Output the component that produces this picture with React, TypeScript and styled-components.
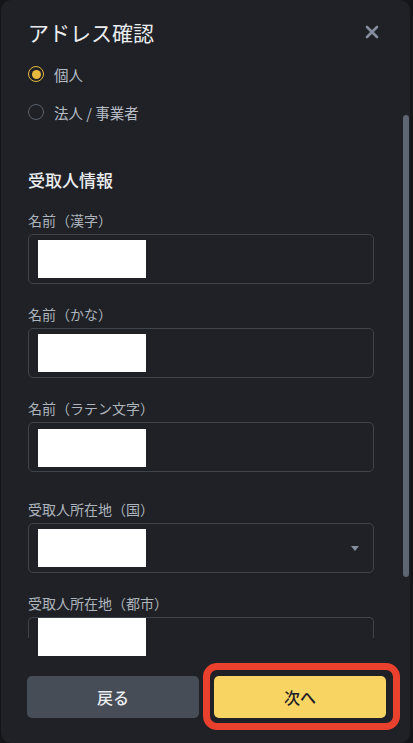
import React, { useState } from 'react';
import styled, { createGlobalStyle } from 'styled-components';

const GlobalStyle = createGlobalStyle`
  html, body {
    margin: 0;
    padding: 0;
    background: #141518;
  }
  body {
    font-family: "Noto Sans CJK JP", "Noto Sans", "Liberation Sans", sans-serif;
  }
`;

const Panel = styled.div`
  position: relative;
  margin-left: 1px;
  width: 409px;
  height: 743px;
  background: #1f2126;
  border-radius: 10px;
  overflow: hidden;
  box-sizing: border-box;
`;

const Header = styled.div`
  display: flex;
  justify-content: space-between;
  align-items: center;
  padding: 18px 31px 0 27px;
`;

const Title = styled.h1`
  margin: 0;
  font-size: 21px;
  line-height: 28px;
  font-weight: 400;
  color: #eaecef;
`;

const CloseButton = styled.button`
  display: flex;
  padding: 0;
  border: none;
  background: none;
  color: #848e9c;
  cursor: pointer;
`;

const Body = styled.div`
  padding: 0 0 0 27px;
`;

const RadioGroup = styled.div`
  display: flex;
  flex-direction: column;
  gap: 14px;
  margin-top: 16px;
`;

const RadioRow = styled.label`
  display: flex;
  align-items: center;
  gap: 10px;
  height: 24px;
  cursor: pointer;
`;

const RadioCircle = styled.span<{ $checked: boolean }>`
  display: flex;
  align-items: center;
  justify-content: center;
  width: 16px;
  height: 16px;
  box-sizing: border-box;
  border-radius: 50%;
  border: 1.5px solid ${p => (p.$checked ? '#e6b740' : '#5a606b')};
  &::after {
    content: '';
    display: ${p => (p.$checked ? 'block' : 'none')};
    width: 9px;
    height: 9px;
    border-radius: 50%;
    background: #e9b93f;
  }
`;

const RadioLabel = styled.span`
  font-size: 14.5px;
  color: #b7bdc6;
`;

const SectionTitle = styled.h2`
  margin: 44px 0 0;
  font-size: 17px;
  line-height: 24px;
  font-weight: 500;
  color: #eaecef;
`;

const Field = styled.div<{ $gap: number }>`
  margin-top: ${p => p.$gap}px;
  width: 346px;
`;

const FieldLabel = styled.div`
  font-size: 14px;
  line-height: 20px;
  color: #aeb4bc;
`;

const InputBox = styled.div<{ $cut?: boolean }>`
  position: relative;
  margin-top: 4px;
  height: ${p => (p.$cut ? '21px' : '50px')};
  box-sizing: border-box;
  border: 1px solid #3f444c;
  border-bottom: ${p => (p.$cut ? 'none' : '1px solid #3f444c')};
  border-radius: ${p => (p.$cut ? '5px 5px 0 0' : '5px')};
  display: flex;
  align-items: center;
  justify-content: flex-end;
  padding-right: 14px;
`;

const Redacted = styled.div<{ $top: number }>`
  position: absolute;
  left: 9px;
  top: ${p => p.$top}px;
  width: 108px;
  height: 38px;
  background: #ffffff;
`;

const Caret = styled.span`
  width: 0;
  height: 0;
  border-left: 4px solid transparent;
  border-right: 4px solid transparent;
  border-top: 5px solid #848e9c;
`;

const ScrollThumb = styled.div`
  position: absolute;
  left: 402px;
  top: 115px;
  width: 6px;
  height: 462px;
  border-radius: 3px;
  background: #5e6673;
`;

const Footer = styled.div`
  display: flex;
  gap: 15px;
  margin-top: 38px;
  padding-left: 26px;
`;

const Button = styled.button<{ $primary?: boolean }>`
  width: 172px;
  height: 42px;
  border: none;
  border-radius: 5px;
  font-family: inherit;
  font-size: 16px;
  font-weight: 500;
  cursor: pointer;
  background: ${p => (p.$primary ? '#f8d563' : '#474d57')};
  color: ${p => (p.$primary ? '#1e2026' : '#eaecef')};
`;

const Highlight = styled.span`
  position: relative;
  display: flex;
  &::before {
    content: '';
    position: absolute;
    left: -11px;
    right: -14px;
    top: -13px;
    bottom: -12px;
    border: 7px solid #e9412d;
    border-radius: 14px;
    pointer-events: none;
  }
`;

const fields = [
  { label: '名前（漢字）', gap: 18, top: 5 },
  { label: '名前（かな）', gap: 20, top: 5 },
  { label: '名前（ラテン文字）', gap: 20, top: 6 },
  { label: '受取人所在地（国）', gap: 27, top: 5, select: true },
  { label: '受取人所在地（都市）', gap: 20, top: 0, cut: true },
];

export default function App() {
  const [type, setType] = useState('personal');

  return (
    <>
      <GlobalStyle />
      <Panel>
        <Header>
          <Title>アドレス確認</Title>
          <CloseButton aria-label="close">
            <svg width="14" height="14" viewBox="0 0 14 14" fill="none" stroke="currentColor" strokeWidth="2.6" strokeLinecap="round">
              <path d="M2 2l10 10M12 2L2 12" />
            </svg>
          </CloseButton>
        </Header>

        <Body>
          <RadioGroup>
            <RadioRow onClick={() => setType('personal')}>
              <RadioCircle $checked={type === 'personal'} />
              <RadioLabel>個人</RadioLabel>
            </RadioRow>
            <RadioRow onClick={() => setType('corporate')}>
              <RadioCircle $checked={type === 'corporate'} />
              <RadioLabel>法人 / 事業者</RadioLabel>
            </RadioRow>
          </RadioGroup>

          <SectionTitle>受取人情報</SectionTitle>

          {fields.map(f => (
            <Field key={f.label} $gap={f.gap}>
              <FieldLabel>{f.label}</FieldLabel>
              <InputBox $cut={f.cut}>
                <Redacted $top={f.top} />
                {f.select && <Caret />}
              </InputBox>
            </Field>
          ))}
        </Body>

        <ScrollThumb />

        <Footer>
          <Button>戻る</Button>
          <Highlight>
            <Button $primary>次へ</Button>
          </Highlight>
        </Footer>
      </Panel>
    </>
  );
}
